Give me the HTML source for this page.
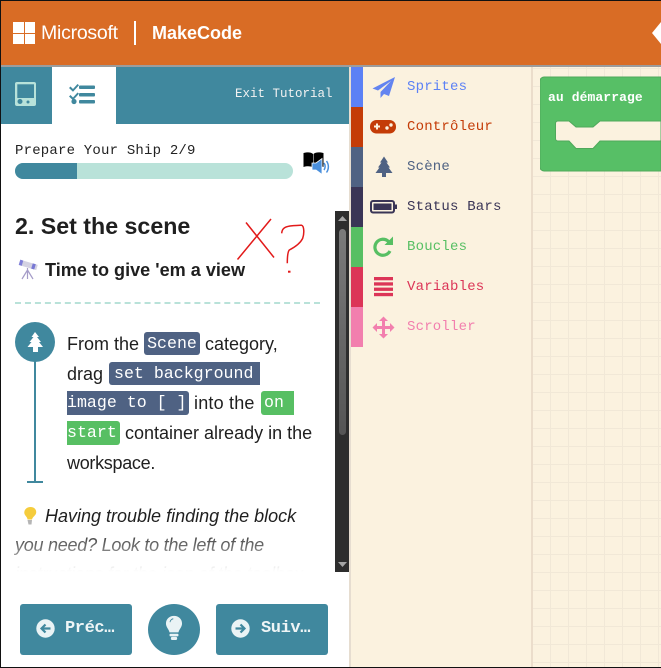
<!DOCTYPE html>
<html><head><meta charset="utf-8">
<style>
html,body{margin:0;padding:0;background:#fff}
#r{position:relative;width:661px;height:668px;overflow:hidden;background:#fff;font-family:"Liberation Sans",sans-serif}
#r div,#r span.a,#r svg.a{position:absolute}
.t{white-space:nowrap}
.m{font-family:"Liberation Mono",monospace}
.b{font-size:18px;color:#1f1f1f;white-space:nowrap;line-height:24px}
.c{font-family:"Liberation Mono",monospace;font-size:16.6px;color:#fff;line-height:24px;white-space:pre;border-radius:3px}
.tb{font-family:"Liberation Mono",monospace;font-size:14px;letter-spacing:.2px;left:407px;white-space:nowrap;line-height:20px}
</style></head><body>
<div id="r">
<!-- top bar -->
<div style="left:0;top:1px;width:661px;height:64px;background:#d96c25"></div>
<div style="left:0;top:65px;width:661px;height:2px;background:#9c9c9c"></div>
<div style="left:13px;top:22px;width:10.5px;height:10.5px;background:#fff"></div>
<div style="left:24.5px;top:22px;width:10.5px;height:10.5px;background:#fff"></div>
<div style="left:13px;top:33.5px;width:10.5px;height:10.5px;background:#fff"></div>
<div style="left:24.5px;top:33.5px;width:10.5px;height:10.5px;background:#fff"></div>
<div class="t" style="left:41px;top:21px;font-size:19.5px;line-height:24px;color:#fff;letter-spacing:-.25px">Microsoft</div>
<div style="left:134px;top:21px;width:2px;height:24px;background:#fff"></div>
<div class="t" style="left:152px;top:21px;font-size:18px;line-height:24px;font-weight:bold;color:#fff">MakeCode</div>
<svg class="a" style="left:650px;top:22px" width="11" height="22"><path d="M11 0L2 11l9 11z" fill="#fff"/></svg>

<!-- left tabs -->
<div style="left:1px;top:67px;width:348px;height:57px;background:#40889e"></div>
<div style="left:52px;top:67px;width:64px;height:57px;background:#fff"></div>
<svg class="a" style="left:14px;top:81px" width="24" height="26" viewBox="0 0 24 26">
<rect x="1" y="1" width="21" height="24" rx="2" fill="#b8e2da"/>
<rect x="3.300" y="3.300" width="16.700" height="13.700" fill="#40889e"/>
<circle cx="6" cy="20.500" r="2.500" fill="#40889e"/><circle cx="14" cy="21" r="1.500" fill="#40889e"/></svg>
<svg class="a" style="left:69px;top:83px" width="28" height="22" viewBox="0 0 28 22" fill="#40889e">
<path d="M1.500 3.500l2.500 2.500 4.500-5 1.500 1.200-6 6.500-4-3.700z"/>
<path d="M1.500 12l2.500 2.500 4.500-5 1.500 1.200-6 6.500-4-3.700z"/>
<circle cx="5" cy="18.500" r="2.600"/>
<rect x="10" y="2.500" width="16" height="3.500" rx="1"/><rect x="10" y="10" width="16" height="3.500" rx="1"/><rect x="10" y="17" width="16" height="3.500" rx="1"/></svg>
<div class="t m" style="left:235px;top:85px;font-size:12.500px;line-height:18px;color:#f2f2f2">Exit Tutorial</div>

<!-- progress -->
<div class="t m" style="left:15px;top:142px;font-size:14px;line-height:18px;color:#222;letter-spacing:.2px">Prepare Your Ship 2/9</div>
<div style="left:15px;top:163px;width:278px;height:16px;border-radius:8px;background:#b9e2d9;overflow:hidden"><div style="left:0;top:0;width:62px;height:16px;background:#40889e"></div></div>
<svg class="a" style="left:303px;top:151px" width="28" height="25" viewBox="0 0 28 25">
<path d="M.5 2c4-1 7.500-1 9.500 1V16.500C7.500 15 4 15 .5 16z" fill="#000"/>
<path d="M20.500 2c-4-1-8-1-10 1V16.500c3-1.500 7-1.500 10-.5z" fill="#000"/>
<path d="M9 12h4l6-4.500v16L13 19H9z" fill="#4a8fdc" stroke="#fff" stroke-width=".8"/>
<path d="M21 12c1.500 2 1.500 5 0 7M23.500 10c2.500 3.500 2.500 8 0 11.500" fill="none" stroke="#4a8fdc" stroke-width="1.500"/></svg>

<!-- headings -->
<div class="t" style="left:15px;top:211px;font-size:23.200px;line-height:30px;font-weight:bold;color:#1f1f1f">2. Set the scene</div>
<svg class="a" style="left:18px;top:259px" width="21" height="22" viewBox="0 0 21 22">
<path d="M9.500 9v3M9.500 11L4 20M9.500 11v9M9.500 11L15 20" stroke="#a59cc8" stroke-width="1.200" fill="none"/>
<path d="M2 3.500l17 5" stroke="#d4d2e2" stroke-width="5.500"/><path d="M1.500 3.300l3 .9" stroke="#7f7fd8" stroke-width="5.500"/><path d="M14 7l3 .9" stroke="#7878d4" stroke-width="5.500"/></svg>
<div class="t" style="left:45px;top:258px;font-size:18.100px;line-height:24px;font-weight:bold;color:#1f1f1f">Time to give 'em a view</div>
<div style="left:15px;top:302px;width:305px;height:0;border-top:2px dashed #b9e2d9"></div>

<!-- step -->
<div style="left:15px;top:322px;width:40px;height:40px;border-radius:50%;background:#40889e"></div>
<svg class="a" style="left:26px;top:331px" width="18" height="22" viewBox="0 0 18 22"><path d="M9 1l4 5h-2l4 5h-2l4 5h-5v5H7v-5H1.500l4-5h-2l4-5h-2z" fill="#fff"/></svg>
<div style="left:33.500px;top:360px;width:2.500px;height:122px;background:#40889e"></div>
<div style="left:27px;top:481px;width:16px;height:2px;background:#40889e"></div>

<div class="b" style="left:67px;top:332px">From the</div>
<div class="c" style="left:144px;top:332px;width:56px;height:23px;line-height:24px;background:#4f6283;text-align:center">Scene</div>
<div class="b" style="left:205px;top:332px">category,</div>
<div class="b" style="left:67px;top:362px">drag</div>
<div class="c" style="left:109px;top:362px;width:146px;height:23px;padding-left:5px;background:#4f6283;border-radius:3px 0 0 3px">set background</div>
<div class="c" style="left:67px;top:391px;width:122px;height:24px;background:#4f6283;border-radius:0 3px 3px 0">image to [ ]</div>
<div class="b" style="left:194px;top:391px;letter-spacing:.2px">into the</div>
<div class="c" style="left:261px;top:391px;width:30px;height:24px;padding-left:3px;background:#57bf63;border-radius:3px 0 0 3px">on</div>
<div class="c" style="left:67px;top:421px;width:53px;height:24px;background:#57bf63;border-radius:0 3px 3px 0">start</div>
<div class="b" style="left:125px;top:421px">container already in the</div>
<div class="b" style="left:67px;top:451px;letter-spacing:-.3px">workspace.</div>

<!-- hint -->
<svg class="a" style="left:21px;top:506px" width="17" height="20" viewBox="0 0 17 20">
<path d="M9.500 1c4 0 6.500 3 5.500 6.500-.5 2-3.500 3.500-4 6H6.500C6.500 11 3.500 9.500 3.300 7 3 3.500 6 1 9.500 1z" fill="#f5cc3c"/>
<path d="M6.500 14h4.500l-.5 4.500h-3z" fill="#b5b5b5"/></svg>
<div class="b" style="left:45px;top:504px;font-style:italic">Having trouble finding the block</div>
<div class="b" style="left:15px;top:533px;font-style:italic;letter-spacing:-.25px">you need? Look to the left of the</div>
<div class="b" style="left:15px;top:562px;font-style:italic;letter-spacing:-.25px">instructions for the icon of the toolbox</div>
<div style="left:1px;top:528px;width:334px;height:44px;background:linear-gradient(rgba(255,255,255,0),rgba(255,255,255,.6) 70%,rgba(255,255,255,.97) 92%,#fff)"></div>
<div style="left:1px;top:572px;width:348px;height:95px;background:#fff"></div>

<!-- scrollbar -->
<div style="left:335px;top:211px;width:14px;height:361px;background:#2d2d2d"></div>
<div style="left:339px;top:229px;width:7px;height:206px;border-radius:4px;background:linear-gradient(#7b7b7b,#555)"></div>
<svg class="a" style="left:337px;top:215px" width="11" height="8"><path d="M5.500 1l4.500 5H1z" fill="#a5a5a5"/></svg>
<svg class="a" style="left:337px;top:560px" width="11" height="8"><path d="M5.500 7L10 2H1z" fill="#a5a5a5"/></svg>

<!-- buttons -->
<div style="left:20px;top:604px;width:112px;height:51px;border-radius:3px;background:#40889e"></div>
<svg class="a" style="left:36px;top:619px" width="19" height="19" viewBox="0 0 19 19"><circle cx="9.500" cy="9.500" r="9.200" fill="#eaf3f5"/><path d="M14.500 9.500H6M9.500 5.500l-4 4 4 4" stroke="#40889e" stroke-width="2.200" fill="none"/></svg>
<div class="t m" style="left:65px;top:617px;font-size:17px;line-height:24px;font-weight:bold;color:#eef5f6;letter-spacing:-.4px">Préc…</div>
<div style="left:148px;top:604px;width:52px;height:51px;border-radius:50%;background:#40889e"></div>
<svg class="a" style="left:165px;top:615px" width="18" height="25" viewBox="0 0 20 28">
<path d="M10 1c5 0 9 3.500 9 8.500 0 4-3 6-4 10H5C4 15.500 1 13.500 1 9.500 1 4.500 5 1 10 1z" fill="#eaf3f5"/>
<path d="M5.500 8c.3-2 2-3.500 3.700-3.800" stroke="#40889e" stroke-width="1" fill="none"/>
<rect x="5" y="21" width="10" height="3" rx="1" fill="#eaf3f5"/><rect x="6.500" y="24.500" width="7" height="3.500" rx="1.500" fill="#eaf3f5"/></svg>
<div style="left:216px;top:604px;width:112px;height:51px;border-radius:3px;background:#40889e"></div>
<svg class="a" style="left:231px;top:619px" width="19" height="19" viewBox="0 0 19 19"><circle cx="9.500" cy="9.500" r="9.200" fill="#eaf3f5"/><path d="M4.500 9.500H13M9.500 5.500l4 4-4 4" stroke="#40889e" stroke-width="2.200" fill="none"/></svg>
<div class="t m" style="left:261px;top:617px;font-size:17px;line-height:24px;font-weight:bold;color:#eef5f6;letter-spacing:-.4px">Suiv…</div>

<!-- annotation -->
<svg class="a" style="left:230px;top:210px" width="80" height="70" viewBox="230 210 80 70" fill="none" stroke="#e21a1a" stroke-width="1.500">
<path d="M246 222.500L274 257.500M271 219L237.500 259.500"/>
<path d="M281.700 233.300C282 229 284 227 290 226 295 225.500 300 225 301.700 225.300 304 226 304.500 233 302.700 238.300 300.500 243 296 246.500 289.300 250 287.500 252 287.300 257 287.300 263.300"/>
<path d="M288 271.700h2.500" stroke-width="2"/></svg>

<!-- toolbox -->
<div style="left:349px;top:67px;width:2px;height:601px;background:#e6ddd0"></div>
<div style="left:351px;top:67px;width:180px;height:601px;background:#fbf2df"></div>
<div style="left:351px;top:67px;width:12px;height:40px;background:#5c81f5"></div>
<div style="left:351px;top:107px;width:12px;height:40px;background:#c43c07"></div>
<div style="left:351px;top:147px;width:12px;height:40px;background:#4f6283"></div>
<div style="left:351px;top:187px;width:12px;height:40px;background:#3a3556"></div>
<div style="left:351px;top:227px;width:12px;height:40px;background:#57bf63"></div>
<div style="left:351px;top:267px;width:12px;height:40px;background:#dc3557"></div>
<div style="left:351px;top:307px;width:12px;height:40px;background:#f27fae"></div>

<svg class="a" style="left:372px;top:76px" width="24" height="23" viewBox="0 0 24 23"><path d="M23 1L.5 12.500l5.500 2L19 5 8.500 16v6l3.500-4 5 2z" fill="#6384f0"/></svg>
<svg class="a" style="left:369px;top:119px" width="28" height="16" viewBox="0 0 28 16"><rect x="1" y="1" width="26" height="13.500" rx="6.500" fill="#c43c07"/><path d="M5 7.500h6M8 4.500v6" stroke="#fbf2df" stroke-width="2"/><circle cx="18" cy="9" r="1.700" fill="#fbf2df"/><circle cx="22" cy="6" r="1.700" fill="#fbf2df"/></svg>
<svg class="a" style="left:374px;top:156px" width="20" height="22" viewBox="0 0 20 22"><path d="M10 .5l4 6h-1.500l3.500 5h-1.500l4 5.500H12v4H8v-4H1.500l4-5.500H4l3.500-5H6z" fill="#4f6283"/></svg>
<svg class="a" style="left:370px;top:199px" width="27" height="16" viewBox="0 0 27 16"><rect x="1" y="2" width="23" height="11.500" rx="2" fill="none" stroke="#3a3556" stroke-width="2"/><rect x="3.500" y="4.500" width="18" height="6.500" fill="#3a3556"/><rect x="25" y="5.500" width="2" height="4.500" fill="#3a3556"/></svg>
<svg class="a" style="left:372px;top:235px" width="23" height="24" viewBox="0 0 23 24"><path d="M16.500 6.500A8 8 0 1 0 18 16" fill="none" stroke="#57bf63" stroke-width="3.200"/><path d="M21 1.500v8.500h-8.500z" fill="#57bf63"/></svg>
<svg class="a" style="left:373px;top:277px" width="21" height="20" viewBox="0 0 21 20" fill="#dc3557"><rect x="1" y="0" width="19" height="3.300"/><rect x="1" y="5.300" width="19" height="3.300"/><rect x="1" y="10.600" width="19" height="3.300"/><rect x="1" y="15.900" width="19" height="3.300"/></svg>
<svg class="a" style="left:372px;top:316px" width="23" height="23" viewBox="0 0 23 23" fill="#f27fae"><path d="M11.500 .5l4.500 4.500h-3v5h5V7l4.500 4.500L18 16v-3h-5v5h3l-4.500 4.500L7 18h3v-5H5v3L.5 11.500 5 7v3h5V5H7z"/></svg>

<div class="tb" style="top:77px;color:#5c81f5">Sprites</div>
<div class="tb" style="top:117px;color:#c43c07">Contrôleur</div>
<div class="tb" style="top:157px;color:#4f6283">Scène</div>
<div class="tb" style="top:197px;color:#3a3556">Status Bars</div>
<div class="tb" style="top:237px;color:#57bf63">Boucles</div>
<div class="tb" style="top:277px;color:#dc3557">Variables</div>
<div class="tb" style="top:317px;color:#f27fae">Scroller</div>

<!-- workspace -->
<div style="left:531px;top:67px;width:130px;height:601px;background-color:#fbf2df;background-image:linear-gradient(#f1e8d7 1px,transparent 1px),linear-gradient(90deg,#f1e8d7 1px,transparent 1px);background-size:18px 18px;background-position:1px 1px"></div>
<div style="left:531px;top:67px;width:2px;height:601px;background:#ebddcb"></div>
<svg class="a" style="left:540px;top:76px" width="121" height="96" viewBox="540 76 121 96">
<path d="M661 77H544a4 4 0 0 0-4 4v86a4 4 0 0 0 4 4h117z" fill="#57bf66" stroke="#4fa85b" stroke-width="1"/>
<path d="M661 121H600l-7 6H576l-7-6H558a2.500 2.500 0 0 0-2.500 2.500v15a2.500 2.500 0 0 0 2.500 2.500h11l7 7.500h17l7-7.500h61z" fill="#fbf2df" stroke="#4fa85b" stroke-width="1"/></svg>
<div class="t m" style="left:548px;top:89px;font-size:13px;line-height:18px;font-weight:bold;color:#fff;letter-spacing:.1px">au démarrage</div>

<!-- outer borders -->
<div style="left:0;top:0;width:661px;height:1px;background:#111"></div>
<div style="left:0;top:0;width:1px;height:668px;background:#111"></div>
<div style="left:0;top:667px;width:661px;height:1px;background:#111"></div>
</div>
</body></html>
